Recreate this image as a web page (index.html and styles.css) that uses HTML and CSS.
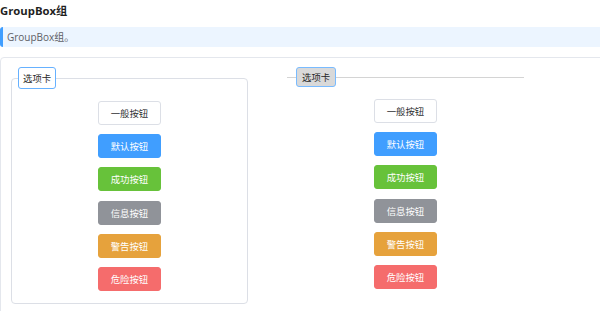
FILE: index.html
```html
<!DOCTYPE html>
<html lang="zh-CN">
<head>
<meta charset="utf-8">
<title>GroupBox组</title>
<link rel="stylesheet" href="styles.css">
</head>
<body>
<div class="page">
  <div class="title">GroupBox组</div>
  <div class="callout">GroupBox组。</div>
  <div class="panel">
    <fieldset class="group group-box">
      <legend class="legend legend-box">选项卡</legend>
      <div class="btns">
        <button class="btn btn-default">一般按钮</button>
        <button class="btn btn-primary">默认按钮</button>
        <button class="btn btn-success">成功按钮</button>
        <button class="btn btn-info">信息按钮</button>
        <button class="btn btn-warning">警告按钮</button>
        <button class="btn btn-danger">危险按钮</button>
      </div>
    </fieldset>
    <fieldset class="group group-line">
      <legend class="legend legend-line">选项卡</legend>
      <div class="btns">
        <button class="btn btn-default">一般按钮</button>
        <button class="btn btn-primary">默认按钮</button>
        <button class="btn btn-success">成功按钮</button>
        <button class="btn btn-info">信息按钮</button>
        <button class="btn btn-warning">警告按钮</button>
        <button class="btn btn-danger">危险按钮</button>
      </div>
    </fieldset>
  </div>
</div>
</body>
</html>
```
FILE: styles.css
```css
html, body {
  margin: 0;
  padding: 0;
  background: #ffffff;
  overflow: hidden;
}
body {
  font-family: "Open Sans", "Noto Sans CJK SC", sans-serif;
  color: #303133;
}
.page {
  width: 600px;
}
.title {
  font-size: 11.3px;
  font-weight: bold;
  line-height: 22px;
  height: 22px;
  color: #1f1f1f;
}
.callout {
  margin-top: 5px;
  height: 20px;
  line-height: 20px;
  font-size: 10px;
  color: #5e6066;
  background: #ecf5ff;
  border-left: 3px solid #409eff;
  border-radius: 3px 0 0 3px;
  padding-left: 4px;
}
.panel {
  margin-top: 10px;
  margin-right: -6px;
  border: 1px solid #e4e7ed;
  border-radius: 4px;
  padding: 9px 0 20px 10px;
  display: flex;
  align-items: flex-start;
  gap: 39px;
}
.group {
  margin: 0;
  min-width: 0;
  width: 237px;
  box-sizing: border-box;
}
.group-box {
  border: 1px solid #dcdfe6;
  border-radius: 4px;
  padding: 0 6px;
}
.group-line {
  border: 0;
  border-top: 1px solid #d4d4d4;
  padding: 0 9px;
}
.legend {
  margin: 0;
  font-size: 9.4px;
  color: #1f1f1f;
  border-radius: 3px;
  font-family: "Noto Sans CJK SC", sans-serif;
}
.legend-box {
  padding: 0 4px;
  line-height: 20px;
  border: 1px solid #66b1ff;
  background: #ffffff;
}
.legend-line {
  padding: 0 5px;
  line-height: 18px;
  border: 1px solid #79bbff;
  background: #d9d9d9;
}
.btns {
  display: flex;
  flex-direction: column;
  align-items: center;
  gap: 9.2px;
  padding: 12px 0 12px;
}
.btn {
  width: 63px;
  height: 24px;
  box-sizing: border-box;
  border: 1px solid transparent;
  border-radius: 3px;
  font-family: "Noto Sans CJK SC", sans-serif;
  font-size: 9.4px;
  line-height: 22px;
  padding: 0;
  text-align: center;
  color: #ffffff;
  margin: 0;
}
.btn-default {
  background: #ffffff;
  border-color: #dcdfe6;
  color: #303133;
}
.btn-primary {
  background: #409eff;
  border-color: #409eff;
}
.btn-success {
  background: #67c23a;
  border-color: #67c23a;
}
.btn-info {
  background: #909399;
  border-color: #909399;
}
.btn-warning {
  background: #e6a23c;
  border-color: #e6a23c;
}
.btn-danger {
  background: #f56c6c;
  border-color: #f56c6c;
}
```
